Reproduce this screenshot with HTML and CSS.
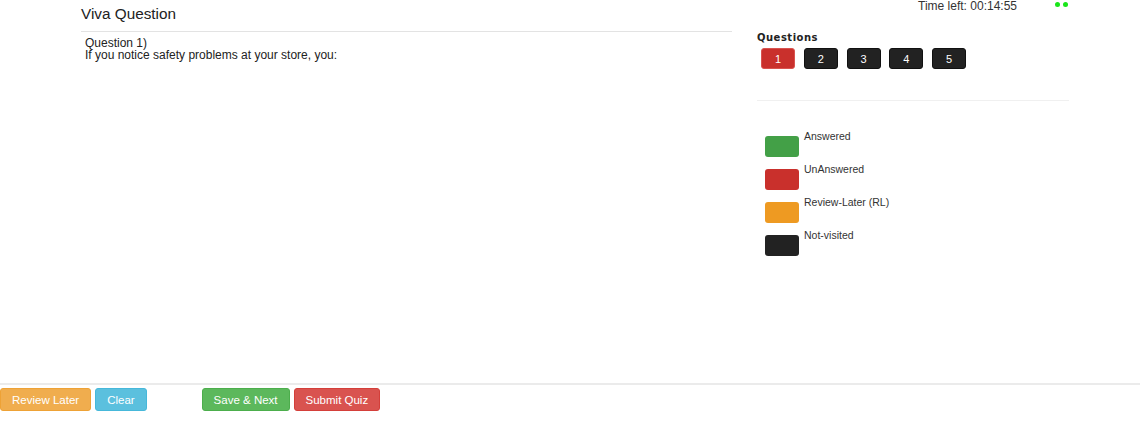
FILE: index.html
```html
<!DOCTYPE html>
<html>
<head>
<meta charset="utf-8">
<link rel="stylesheet" href="styles.css">
</head>
<body>
<div class="page">
  <main class="main">
    <section class="left">
      <h1 class="title">Viva Question</h1>
      <div class="question">
        <div>Question 1)</div>
        <div>If you notice safety problems at your store, you:</div>
      </div>
    </section>
    <aside class="right">
      <div class="timer">
        <span class="time">Time left: 00:14:55</span>
        <span class="dots"><i></i><i></i></span>
      </div>
      <h2 class="qhead">Questions</h2>
      <div class="qnums">
        <span class="qn red">1</span>
        <span class="qn dark">2</span>
        <span class="qn dark">3</span>
        <span class="qn dark">4</span>
        <span class="qn dark">5</span>
      </div>
      <div class="sep"></div>
      <ul class="legend">
        <li><span class="sw green"></span><span>Answered</span></li>
        <li><span class="sw red"></span><span>UnAnswered</span></li>
        <li><span class="sw orange"></span><span>Review-Later (RL)</span></li>
        <li><span class="sw dark"></span><span>Not-visited</span></li>
      </ul>
    </aside>
  </main>
  <footer class="footer">
    <button class="btn warn">Review Later</button>
    <button class="btn info">Clear</button>
    <button class="btn ok spaced">Save &amp; Next</button>
    <button class="btn danger">Submit Quiz</button>
  </footer>
</div>
</body>
</html>
```
FILE: styles.css
```css
html, body {
  margin: 0;
  padding: 0;
  background: #fff;
}
body {
  font-family: "Liberation Sans", Arial, sans-serif;
  color: #333;
  font-size: 12px;
}
.page {
  height: 430px;
  display: flex;
  flex-direction: column;
}
.main {
  flex: 1;
  display: flex;
  padding-left: 81px;
}
.left {
  width: 651px;
}
.title {
  margin: 0;
  font-size: 15.3px;
  font-weight: normal;
  line-height: 17px;
  padding-top: 5px;
  padding-bottom: 9px;
  border-bottom: 1px solid #e3e3e3;
  color: #222;
}
.question {
  padding: 5px 4px 0;
  line-height: 12px;
  color: #222;
}
.right {
  margin-left: 25px;
  width: 312px;
}
.timer {
  display: flex;
  justify-content: flex-end;
  align-items: flex-start;
  height: 30px;
  line-height: 13px;
}
.time {
  color: #333;
  font-size: 12px;
}
.dots {
  display: flex;
  gap: 3px;
  margin-left: 38px;
  margin-right: 1px;
  padding-top: 2px;
}
.dots i {
  width: 5px;
  height: 5px;
  border-radius: 50%;
  background: #19e619;
}
.qhead {
  margin: 0;
  padding-top: 1px;
  font-family: "DejaVu Sans", sans-serif;
  font-size: 10px;
  font-weight: bold;
  line-height: 14px;
  color: #222;
  letter-spacing: 0.5px;
}
.qnums {
  display: flex;
  gap: 8.75px;
  margin-top: 3px;
  margin-left: 4px;
}
.qn {
  width: 34px;
  height: 21px;
  box-sizing: border-box;
  border-radius: 3px;
  color: #fff;
  font-size: 11px;
  display: flex;
  align-items: center;
  justify-content: center;
}
.qn.red { background: #c9302c; border: 1px solid #d9534f; }
.qn.dark { background: #222; border: 1px solid #111; }
.sep {
  margin-top: 31px;
  border-top: 1px solid #f0f0f0;
}
.legend {
  list-style: none;
  margin: 29px 0 0;
  padding: 0 0 0 8px;
}
.legend li {
  display: flex;
  align-items: flex-start;
  gap: 5px;
  height: 33px;
  font-size: 10.5px;
  line-height: 12px;
  color: #333;
}
.sw {
  width: 34px;
  height: 21px;
  border-radius: 3px;
  margin-top: 6px;
}
.sw.green { background: #43a047; }
.sw.red { background: #c9302c; }
.sw.orange { background: #ee9a22; }
.sw.dark { background: #222; }
.footer {
  border-top: 2px solid #ebebeb;
  height: 47px;
  box-sizing: border-box;
  padding-top: 3px;
  display: flex;
  align-items: flex-start;
  gap: 4px;
}
.btn {
  height: 23px;
  padding: 0 11px;
  border-radius: 3px;
  font-family: "Liberation Sans", Arial, sans-serif;
  font-size: 11.5px;
  color: #fff;
  cursor: pointer;
}
.btn.spaced { margin-left: 51px; }
.btn.warn { background: #f0ad4e; border: 1px solid #eea236; }
.btn.info { background: #5bc0de; border: 1px solid #46b8da; }
.btn.ok { background: #5cb85c; border: 1px solid #4cae4c; }
.btn.danger { background: #d9534f; border: 1px solid #d43f3a; }
```
